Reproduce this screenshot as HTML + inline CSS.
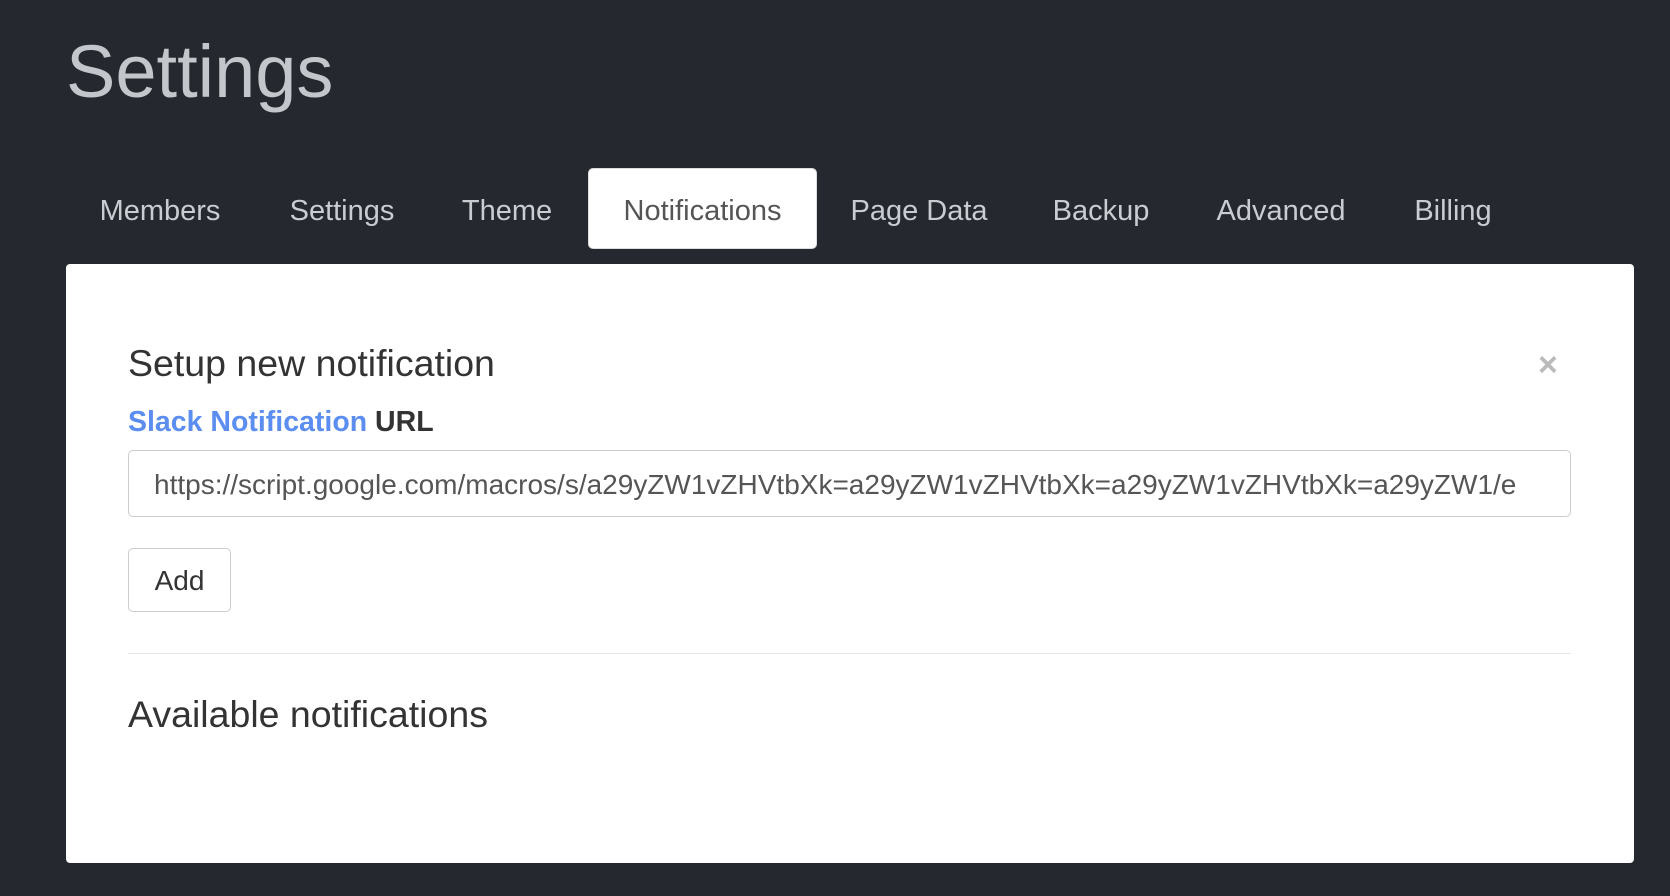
<!DOCTYPE html>
<html><head><meta charset="utf-8"><style>
body{margin:0;width:1670px;height:896px;background:#25282e;font-family:"Liberation Sans",sans-serif;position:relative;overflow:hidden}
.a{position:absolute;white-space:nowrap}
.tab{position:absolute;top:171px;height:81px;line-height:81px;font-size:29px;color:#c9ccd1;transform:translateX(-50%)}
</style></head><body>
<div class="a" style="left:66px;top:27px;font-size:74px;color:#c3c6cb;line-height:90px">Settings</div>
<div class="tab" style="left:160px">Members</div>
<div class="tab" style="left:342px">Settings</div>
<div class="tab" style="left:507px">Theme</div>
<div class="a" style="left:588px;top:168px;width:229px;height:81px;background:#fff;border-radius:5px;border:1px solid #ddd;box-sizing:border-box;text-align:center;line-height:85px;font-size:29px;color:#555">Notifications</div>
<div class="tab" style="left:919px">Page Data</div>
<div class="tab" style="left:1101px">Backup</div>
<div class="tab" style="left:1281px">Advanced</div>
<div class="tab" style="left:1453px">Billing</div>
<div class="a" style="left:66px;top:264px;width:1568px;height:599px;background:#fff;border-radius:4px"></div>
<div class="a" style="left:128px;top:342px;font-size:37.5px;color:#333;line-height:42px">Setup new notification</div>
<div class="a" style="left:1538px;top:345px;font-size:34px;color:#bbb;font-weight:bold;line-height:40px">×</div>
<div class="a" style="left:128px;top:404px;font-size:28.5px;font-weight:bold;line-height:36px;color:#333"><span style="color:#5b8ef0">Slack Notification</span> URL</div>
<div class="a" style="left:128px;top:450px;width:1443px;height:67px;border:1px solid #ccc;border-radius:5px;box-sizing:border-box;overflow:hidden;padding-left:25px;line-height:67px;font-size:28px;color:#555">https://script.google.com/macros/s/a29yZW1vZHVtbXk=a29yZW1vZHVtbXk=a29yZW1vZHVtbXk=a29yZW1/e</div>
<div class="a" style="left:128px;top:548px;width:103px;height:64px;border:1px solid #ccc;border-radius:5px;box-sizing:border-box;text-align:center;line-height:64px;font-size:28px;color:#333">Add</div>
<div class="a" style="left:128px;top:653px;width:1443px;height:1px;background:#e5e5e5"></div>
<div class="a" style="left:128px;top:693px;font-size:37.5px;color:#333;line-height:42px">Available notifications</div>
</body></html>
